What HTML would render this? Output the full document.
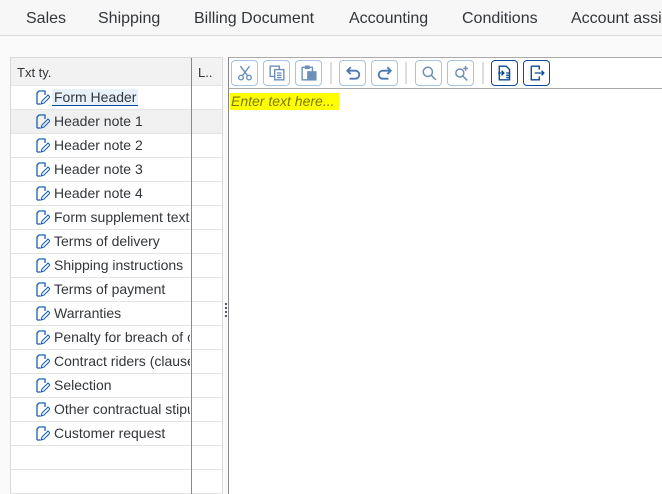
<!DOCTYPE html><html><head><style>
body{margin:0;width:662px;height:493px;overflow:hidden;background:#fafafa;font-family:"Liberation Sans",sans-serif;position:relative}
.tabs{position:absolute;left:0;top:0;width:662px;height:35px;border-bottom:1px solid #d9d9d9;background:#f7f7f7;white-space:nowrap;overflow:hidden}
.tabs span{position:absolute;top:10px;font-size:16px;color:#32363a}
.tbl{position:absolute;left:10px;top:57px;width:211px;height:436px;background:#fff;border:1px solid #d9d9d9;border-bottom:none;overflow:hidden}
.hd{height:27px;background:#f2f2f2;border-bottom:1px solid #e5e5e5;font-size:13px;color:#32363a;position:relative}
.row{height:23px;border-bottom:1px solid #e5e5e5;position:relative;font-size:14px;color:#32363a}
.row.sel{background:#f0f0f0}
.row .t{position:absolute;left:43px;top:3px;white-space:nowrap;width:136px;overflow:hidden}
.ic{position:absolute;left:23px;top:4px}
.vl{position:absolute;left:180px;top:0;width:1px;height:436px;background:#888}
.ed{position:absolute;left:228px;top:57px;width:434px;height:436px;background:#fff;border-left:1px solid #888;border-top:1px solid #aaa;overflow:hidden}
.tb{height:30px;border-bottom:1px solid #aaa;position:relative;background:#fff}
.b{position:absolute;top:2px;width:27px;height:26px;border:1px solid #a8c4e0;border-radius:4px;box-sizing:border-box;display:flex;align-items:center;justify-content:center}
.b.d{border-color:#0a4a9a}
.sep{position:absolute;top:4px;width:2px;height:22px;background:#ddd}
</style></head><body>
<div class="tabs"><span style="left:26px">Sales</span><span style="left:98px">Shipping</span><span style="left:194px">Billing Document</span><span style="left:349px">Accounting</span><span style="left:462px">Conditions</span><span style="left:571px">Account assignment</span></div>
<div class="tbl">
<div class="hd"><span style="position:absolute;left:6px;top:7px">Txt ty.</span><span style="position:absolute;left:187px;top:7px">L..</span></div>
<div id="rows"></div>
<div class="vl"></div>
</div>
<div style="position:absolute;left:225px;top:303px;width:2px;height:14px;background:repeating-linear-gradient(#557 0 2px,transparent 2px 4px)"></div>
<div class="ed">
<div class="tb">
<div class="b" style="left:2px"><svg width="16" height="16" viewBox="0 0 14 14" fill="none" stroke="#6a8fb8" stroke-width="1.2"><path d="M3 1l6 8M11 1l-6 8"/><circle cx="3.5" cy="11" r="2"/><circle cx="10.5" cy="11" r="2"/></svg></div>
<div class="b" style="left:34px"><svg width="16" height="16" viewBox="0 0 14 14" fill="none" stroke="#6a8fb8" stroke-width="1.2"><rect x="1" y="1" width="8" height="9"/><rect x="5" y="4" width="8" height="9" fill="#fff"/><path d="M7 7h4M7 9h4M7 11h4"/></svg></div>
<div class="b" style="left:66px"><svg width="16" height="16" viewBox="0 0 14 14" fill="none" stroke="#6a8fb8" stroke-width="1.2"><rect x="1" y="2" width="9" height="11"/><rect x="4" y="1" width="3" height="2"/><rect x="6" y="6" width="7" height="7" fill="#6a8fb8"/></svg></div>
<div class="sep" style="left:101px"></div>
<div class="b" style="left:110px"><svg width="16" height="16" viewBox="0 0 14 14" fill="none" stroke="#4a78b0" stroke-width="1.6"><path d="M5 2L2 5l3 3M2 5h7a3.5 3.5 0 010 7H4"/></svg></div>
<div class="b" style="left:142px"><svg width="16" height="16" viewBox="0 0 14 14" fill="none" stroke="#4a78b0" stroke-width="1.6"><path d="M9 2l3 3-3 3M12 5H5a3.5 3.5 0 000 7h5"/></svg></div>
<div class="sep" style="left:176px"></div>
<div class="b" style="left:186px"><svg width="16" height="16" viewBox="0 0 14 14" fill="none" stroke="#6a8fb8" stroke-width="1.3"><circle cx="6" cy="6" r="4"/><path d="M9 9l4 4"/></svg></div>
<div class="b" style="left:218px"><svg width="16" height="16" viewBox="0 0 14 14" fill="none" stroke="#6a8fb8" stroke-width="1.3"><circle cx="6" cy="7" r="3.5"/><path d="M8.5 9.5l4 4M11 1v4M9 3h4"/></svg></div>
<div class="sep" style="left:253px"></div>
<div class="b d" style="left:262px"><svg width="16" height="16" viewBox="0 0 14 14" fill="none" stroke="#0a4a9a" stroke-width="1.2"><path d="M2 1h6l3 3v9H2z"/><path d="M1 7h5M4 5l2 2-2 2M8 7h3M8 9h3M8 11h3"/></svg></div>
<div class="b d" style="left:294px"><svg width="16" height="16" viewBox="0 0 14 14" fill="none" stroke="#0a4a9a" stroke-width="1.2"><path d="M2 1h7v3M2 1v12h7v-3"/><path d="M5 7h8M11 5l2 2-2 2"/></svg></div>
</div>
<div style="position:absolute;left:1px;top:35px;background:#ffff00;font-style:italic;font-size:14px;color:#7a7a00;padding:0 4px 0 1px;height:17px;line-height:16px">Enter text here...</div>
</div>
<script>
var n=["Form Header","Header note 1","Header note 2","Header note 3","Header note 4","Form supplement text","Terms of delivery","Shipping instructions","Terms of payment","Warranties","Penalty for breach of contract","Contract riders (clauses)","Selection","Other contractual stipulations","Customer request","",""];
var ic='<svg class="ic" width="16" height="16" viewBox="0 0 16 16" fill="none" stroke="#1a5fb4" stroke-width="1.3"><path d="M3 14V3l2-2h6v4"/><path d="M3 14h3" /><path d="M7 14l1-3 6-6 2 2-6 6z" stroke-width="1.1"/></svg>';
var h="";n.forEach(function(t,i){h+='<div class="row'+(i==1?' sel':'')+'">'+(t?ic+'<span class="t"'+(i==0?' style="background:#e8f0fa;border-bottom:1px solid #0a4a9a;padding:0 2px;left:41px;width:auto"':'')+'>'+t+'</span>':'')+'</div>'});
document.getElementById("rows").innerHTML=h;
</script>
</body></html>
